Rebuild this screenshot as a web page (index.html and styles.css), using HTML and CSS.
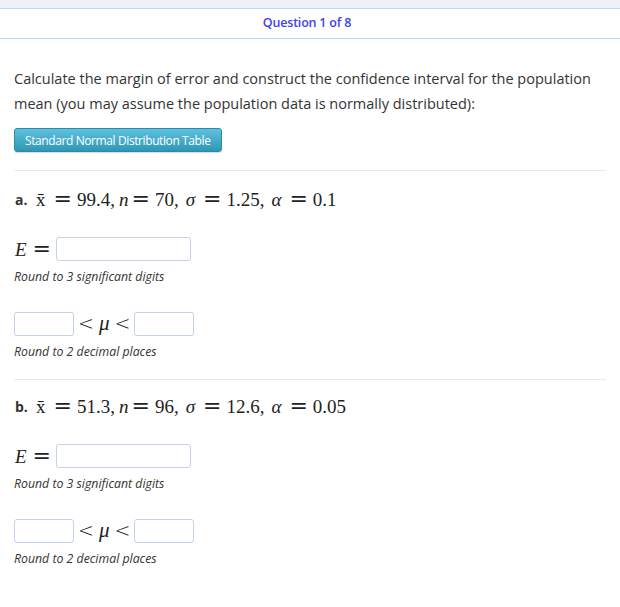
FILE: index.html
```html
<!DOCTYPE html>
<html lang="en">
<head>
    <meta charset="UTF-8">
    <meta name="viewport" content="width=device-width, initial-scale=1.0">
    <title>Question 1 of 8</title>
    <link rel="stylesheet" href="styles.css">
</head>
<body>
    <div class="top-band"></div>
    <div class="question-header">Question 1 of 8</div>

    <div class="question-body">
        <p class="prompt">Calculate the margin of error and construct the confidence interval for the population mean (you may assume the population data is normally distributed):</p>
        <button class="table-btn">Standard Normal Distribution Table</button>

        <div class="part">
            <div class="givens">
                <span class="part-label">a.</span>
                <span class="math">
                    <span class="mi up">x̄</span><span class="mo wide">=</span>99.4,<span class="mi ital n">n</span><span class="mo">=</span>70,<span class="mi ital gap">σ</span><span class="mo wide">=</span>1.25,<span class="mi ital gap">α</span><span class="mo wide">=</span>0.1
                </span>
            </div>

            <div class="answer-row">
                <span class="math"><span class="mi ital">E</span><span class="mo eq">=</span></span>
                <input type="text" class="answer-box wide-box">
            </div>
            <div class="hint">Round to 3 significant digits</div>

            <div class="answer-row interval">
                <input type="text" class="answer-box short-box">
                <span class="math"><span class="mo rel">&lt;</span><span class="mi ital mu">μ</span><span class="mo rel">&lt;</span></span>
                <input type="text" class="answer-box short-box">
            </div>
            <div class="hint">Round to 2 decimal places</div>
        </div>

        <div class="part">
            <div class="givens">
                <span class="part-label">b.</span>
                <span class="math">
                    <span class="mi up">x̄</span><span class="mo wide">=</span>51.3,<span class="mi ital n">n</span><span class="mo">=</span>96,<span class="mi ital gap">σ</span><span class="mo wide">=</span>12.6,<span class="mi ital gap">α</span><span class="mo wide">=</span>0.05
                </span>
            </div>

            <div class="answer-row">
                <span class="math"><span class="mi ital">E</span><span class="mo eq">=</span></span>
                <input type="text" class="answer-box wide-box">
            </div>
            <div class="hint">Round to 3 significant digits</div>

            <div class="answer-row interval">
                <input type="text" class="answer-box short-box">
                <span class="math"><span class="mo rel">&lt;</span><span class="mi ital mu">μ</span><span class="mo rel">&lt;</span></span>
                <input type="text" class="answer-box short-box">
            </div>
            <div class="hint">Round to 2 decimal places</div>
        </div>
    </div>
</body>
</html>
```

FILE: styles.css
```css
:root {
    --rule-blue: #c3d8f1;
    --text-color: #333333;
    --box-border: #c4d3e7;
}

* {
    box-sizing: border-box;
    margin: 0;
    padding: 0;
}

body {
    font-family: 'Open Sans', sans-serif;
    background-color: white;
    color: var(--text-color);
}

.top-band {
    height: 9px;
    background-color: #eef1f9;
    border-bottom: 1px solid var(--rule-blue);
}

.question-header {
    height: 30px;
    padding-right: 6px;
    border-bottom: 1px solid var(--rule-blue);
    text-align: center;
    font-size: 12.5px;
    font-weight: 600;
    line-height: 28px;
    color: #3d3ff0;
    letter-spacing: -0.2px;
}

.question-body {
    padding: 0 14px;
}

.prompt {
    margin-top: 27px;
    font-size: 14.5px;
    line-height: 25px;
}

.table-btn {
    display: block;
    margin-top: 12px;
    height: 24px;
    padding: 0 10px;
    border: 1px solid #2a8aa8;
    border-radius: 3px;
    background: linear-gradient(to bottom, #5ec1df, #2f97b6);
    color: white;
    font-family: 'Open Sans', sans-serif;
    font-size: 12px;
    letter-spacing: -0.4px;
    box-shadow: 0 1px 1px rgba(0, 0, 0, 0.15);
}

.part {
    margin-top: 18px;
    border-top: 1px solid #e8e8e8;
    padding-top: 16px;
    padding-bottom: 19px;
}

.part + .part {
    margin-top: 0;
    padding-top: 14px;
}

.givens {
    display: flex;
    align-items: center;
    height: 24px;
}

.part-label {
    font-size: 14px;
    font-weight: 700;
    margin-left: 1px;
    width: 21px;
}

.math {
    font-family: 'Liberation Serif', serif;
    font-size: 19px;
    color: #222222;
    white-space: nowrap;
}

.mi.ital {
    font-style: italic;
}

.mi.n {
    margin-left: 4px;
}

.mi.gap {
    margin-left: 7px;
}

.mo {
    font-family: 'DejaVu Serif', serif;
    font-size: 22px;
    line-height: 1;
    margin: 0 5px 0 3px;
}

.mo.wide {
    margin-left: 8px;
}

.mo.eq {
    margin: 0 0 0 6px;
}

.mo.rel {
    font-family: 'DejaVu Sans', sans-serif;
    font-size: 19px;
    font-weight: 200;
    margin: 0 2px;
}

.mu {
    font-size: 21px;
    margin: 0 3px;
}

.answer-row {
    display: flex;
    align-items: center;
    gap: 5px;
    margin-top: 26px;
}

.answer-row .math {
    margin-left: 1px;
}

.answer-row.interval {
    margin-top: 26px;
    gap: 2px;
}

.answer-row.interval .math {
    margin-left: 0;
}

.answer-box {
    height: 24px;
    border: 1px solid var(--box-border);
    border-radius: 3px;
    background-color: white;
}

.wide-box {
    width: 135px;
}

.short-box {
    width: 60px;
}

.hint {
    margin-top: 8px;
    font-size: 12.3px;
    font-style: italic;
    line-height: 16px;
}
```
